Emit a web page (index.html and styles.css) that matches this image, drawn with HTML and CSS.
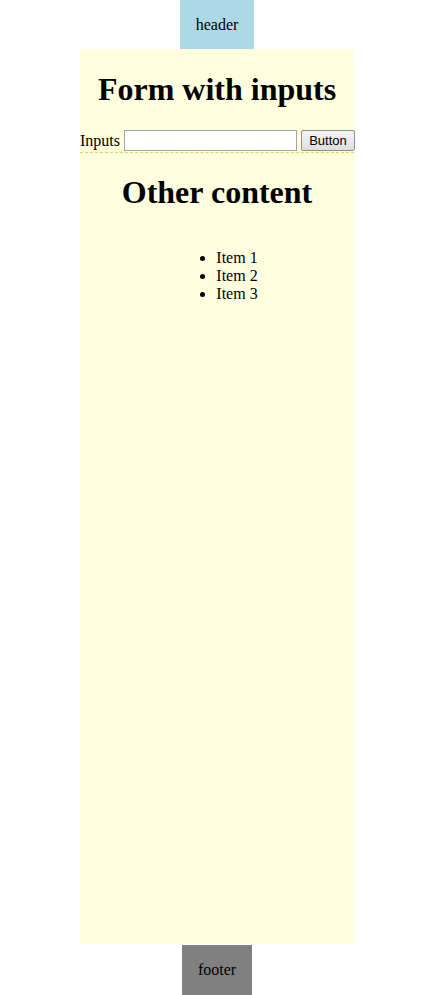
FILE: index.html
```html
<!DOCTYPE html>
<html>
<head>
<meta charset="utf-8">
<link rel="stylesheet" href="styles.css">
</head>
<body>
<div class="page">
  <header class="header">header</header>
  <main class="main">
    <h1 class="title">Form with inputs</h1>
    <form class="form">
      <label class="label">Inputs</label>
      <input class="field" type="text">
      <button class="btn" type="button">Button</button>
    </form>
    <h1 class="title">Other content</h1>
    <ul class="list">
      <li>Item 1</li>
      <li>Item 2</li>
      <li>Item 3</li>
    </ul>
  </main>
  <footer class="footer">footer</footer>
</div>
</body>
</html>
```
FILE: styles.css
```css
html, body {
  margin: 0;
  padding: 0;
  background: #ffffff;
}
body {
  font-family: "Liberation Serif", "Times New Roman", serif;
  font-size: 16px;
  color: #000;
}
.page {
  display: flex;
  flex-direction: column;
  align-items: center;
  padding-left: 5px;
  height: 995px;
  overflow: hidden;
}
.header {
  width: 74px;
  height: 49px;
  line-height: 49px;
  text-align: center;
  background: #add8e6;
  flex: none;
}
.main {
  box-sizing: border-box;
  width: 274px;
  height: 895px;
  padding-top: 1px;
  background: #ffffe0;
  text-align: center;
  display: flow-root;
  flex: none;
  margin-bottom: 1px;
}
.title {
  font-size: 32px;
  font-weight: bold;
  margin: 21.44px 0;
  line-height: 37px;
}
.form {
  display: flex;
  align-items: center;
  gap: 4px;
  height: 22px;
  border-bottom: 1px dashed #e2d35a;
  white-space: nowrap;
}
.label {
  font-size: 16px;
  line-height: 18px;
}
.field {
  box-sizing: border-box;
  width: 173px;
  height: 21px;
  margin: 0;
  padding: 1px 2px;
  border: 1px solid #a5a5a5;
  background: #fff;
  flex: none;
}
.btn {
  box-sizing: border-box;
  width: 54px;
  height: 21px;
  margin: 0;
  padding: 0;
  border: 1px solid #8e8f8f;
  border-radius: 2px;
  background: linear-gradient(#f4f4f4, #dedede);
  font-family: "Liberation Sans", Arial, sans-serif;
  font-size: 13px;
  color: #000;
  flex: none;
}
.list {
  display: inline-block;
  text-align: left;
  margin: 16px 0;
  padding-left: 40px;
  line-height: 18px;
}
.footer {
  width: 70px;
  height: 50px;
  line-height: 50px;
  text-align: center;
  background: #808080;
  flex: none;
}
```
